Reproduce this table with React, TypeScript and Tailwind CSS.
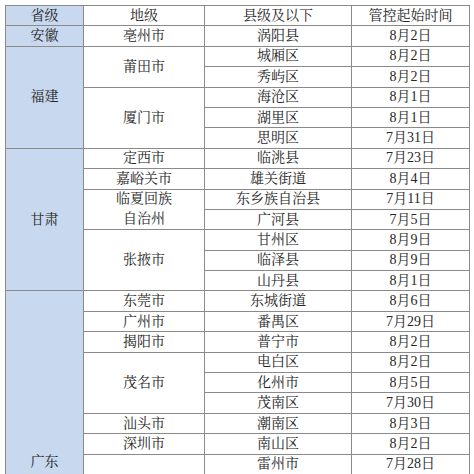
type County = [string, string];
type City = { name: string; counties: County[] };
type Province = { name: string; cities: City[]; bottom?: boolean };

const provinces: Province[] = [
  { name: '安徽', cities: [{ name: '亳州市', counties: [['涡阳县', '8月2日']] }] },
  {
    name: '福建',
    cities: [
      { name: '莆田市', counties: [['城厢区', '8月2日'], ['秀屿区', '8月2日']] },
      { name: '厦门市', counties: [['海沧区', '8月1日'], ['湖里区', '8月1日'], ['思明区', '7月31日']] },
    ],
  },
  {
    name: '甘肃',
    cities: [
      { name: '定西市', counties: [['临洮县', '7月23日']] },
      { name: '嘉峪关市', counties: [['雄关街道', '8月4日']] },
      { name: '临夏回族\n自治州', counties: [['东乡族自治县', '7月11日'], ['广河县', '7月5日']] },
      { name: '张掖市', counties: [['甘州区', '8月9日'], ['临泽县', '8月9日'], ['山丹县', '8月1日']] },
    ],
  },
  {
    name: '广东',
    bottom: true,
    cities: [
      { name: '东莞市', counties: [['东城街道', '8月6日']] },
      { name: '广州市', counties: [['番禺区', '7月29日']] },
      { name: '揭阳市', counties: [['普宁市', '8月2日']] },
      { name: '茂名市', counties: [['电白区', '8月2日'], ['化州市', '8月5日'], ['茂南区', '7月30日']] },
      { name: '汕头市', counties: [['潮南区', '8月3日']] },
      { name: '深圳市', counties: [['南山区', '8月2日']] },
      { name: '', counties: [['雷州市', '7月28日']] },
    ],
  },
];

// full class names so tailwind picks them up
const spans: Record<number, string> = {
  1: '',
  2: 'row-span-2',
  3: 'row-span-3',
  5: 'row-span-5',
  7: 'row-span-7',
  9: 'row-span-9',
};

const cell = 'flex items-center justify-center border-r border-b border-[#8a8a8a] text-center leading-[20px]';

export default function App() {
  return (
    <div className="h-[474px] w-[474px] overflow-hidden bg-white pl-[5px] pt-[5px] font-['Liberation_Serif','Noto_Serif_CJK_SC','Noto_Sans_CJK_SC',serif] text-[14px] text-[#262626]">
      <div className="grid w-max grid-cols-[78px_121px_147px_118px] auto-rows-[20.4px] border-t border-l border-[#8a8a8a]">
        <div className={`${cell} bg-[#c8d9ef]`}>省级</div>
        <div className={cell}>地级</div>
        <div className={cell}>县级及以下</div>
        <div className={cell}>管控起始时间</div>

        {provinces.map((p) => {
          const rows = p.cities.reduce((n, c) => n + c.counties.length, 0);
          return p.cities.map((c, ci) =>
            c.counties.map(([county, date], ki) => (
              <Row
                key={`${p.name}-${c.name}-${county}`}
                province={ci === 0 && ki === 0 ? p : null}
                provinceRows={rows}
                city={ki === 0 ? c : null}
                county={county}
                date={date}
              />
            )),
          );
        })}
      </div>
    </div>
  );
}

function Row({
  province,
  provinceRows,
  city,
  county,
  date,
}: {
  province: Province | null;
  provinceRows: number;
  city: City | null;
  county: string;
  date: string;
}) {
  return (
    <>
      {province && (
        <div
          className={`${cell} ${spans[provinceRows]} bg-[#c8d9ef] ${province.bottom ? '!items-end pb-[2px]' : ''}`}
        >
          {province.name}
        </div>
      )}
      {city && (
        <div className={`${cell} ${spans[city.counties.length]} whitespace-pre-line`}>{city.name}</div>
      )}
      <div className={cell}>{county}</div>
      <div className={cell}>{date}</div>
    </>
  );
}
